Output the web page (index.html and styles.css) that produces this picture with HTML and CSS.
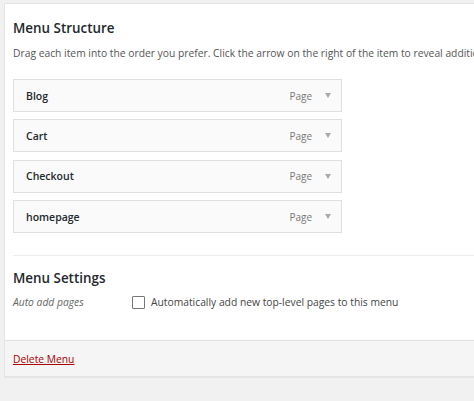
FILE: index.html
```html
<!DOCTYPE html>
<html>
<head>
<meta charset="utf-8">
<link rel="stylesheet" href="styles.css">
</head>
<body>
<div class="panel">
  <div class="body">
    <h3 class="title">Menu Structure</h3>
    <p class="desc">Drag each item into the order you prefer. Click the arrow on the right of the item to reveal additional configuration options.</p>
    <ul class="items">
      <li class="item"><span class="name">Blog</span><span class="type">Page</span><span class="arrow"></span></li>
      <li class="item"><span class="name">Cart</span><span class="type">Page</span><span class="arrow"></span></li>
      <li class="item"><span class="name">Checkout</span><span class="type">Page</span><span class="arrow"></span></li>
      <li class="item"><span class="name">homepage</span><span class="type">Page</span><span class="arrow"></span></li>
    </ul>
    <div class="settings">
      <h3 class="title">Menu Settings</h3>
      <div class="row">
        <span class="label">Auto add pages</span>
        <label class="check"><span class="box"></span>Automatically add new top-level pages to this menu</label>
      </div>
    </div>
  </div>
  <div class="footer">
    <a class="delete" href="#">Delete Menu</a>
  </div>
</div>
</body>
</html>
```

FILE: styles.css
```css
html, body {
  margin: 0;
  padding: 0;
}
body {
  background: #f1f1f1;
  font-family: "Open Sans", "Liberation Sans", sans-serif;
  color: #444;
  width: 474px;
  height: 401px;
  overflow: hidden;
}
.panel {
  margin: 3px 0 0 4px;
  width: 500px;
  background: #fff;
  border: 1px solid #e5e5e5;
  border-right: none;
}
.body {
  padding: 0 0 0 8px;
}
.title {
  margin: 0;
  font-size: 13.4px;
  font-weight: 600;
  color: #23282d;
  line-height: 20px;
}
.body > .title {
  padding-top: 14px;
}
.desc {
  margin: 7px 0 0;
  font-size: 10.3px;
  line-height: 16px;
  color: #555;
  white-space: nowrap;
}
.items {
  list-style: none;
  margin: 18px 0 0;
  padding: 0;
  width: 329px;
  display: flex;
  flex-direction: column;
  gap: 7.4px;
}
.item {
  height: 31px;
  border: 1px solid #dfdfdf;
  background: #fafafa;
  display: flex;
  align-items: center;
  padding: 0 10px 0 12px;
  font-size: 10.5px;
}
.name {
  font-weight: 600;
  color: #23282d;
  flex: 1;
}
.type {
  color: #777;
  font-size: 10px;
}
.arrow {
  margin-left: 13px;
  width: 0;
  height: 0;
  border-left: 3.5px solid transparent;
  border-right: 3.5px solid transparent;
  border-top: 5px solid #aaa;
}
.settings {
  margin-top: 22px;
  border-top: 1px solid #eee;
  padding-top: 12px;
  padding-bottom: 31px;
}
.row {
  display: flex;
  align-items: center;
  margin-top: 7px;
  font-size: 10.3px;
}
.label {
  width: 119px;
  font-style: italic;
  color: #666;
}
.check {
  display: flex;
  align-items: center;
  color: #444;
}
.box {
  width: 11px;
  height: 11px;
  border: 1px solid #777;
  background: #fff;
  margin-right: 6px;
  border-radius: 1px;
}
.footer {
  background: #f5f5f5;
  border-top: 1px solid #dfdfdf;
  border-bottom: 1px solid #e5e5e5;
  height: 35px;
  padding-left: 8px;
  display: flex;
  align-items: center;
}
.delete {
  color: #a00;
  font-size: 10.3px;
  text-decoration: underline;
}
```
